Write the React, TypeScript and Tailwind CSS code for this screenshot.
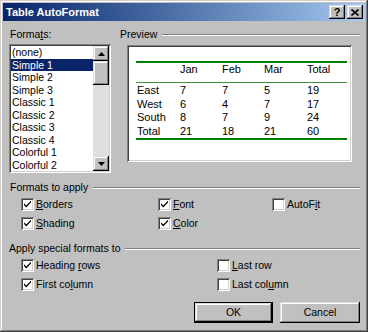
import React from "react";

const raised =
  "shadow-[inset_-1px_-1px_#000000,inset_1px_1px_#dcdcdc,inset_-2px_-2px_#808080,inset_2px_2px_#ffffff]";
const sunken =
  "shadow-[inset_1px_1px_#808080,inset_-1px_-1px_#ffffff,inset_2px_2px_#404040,inset_-2px_-2px_#d4d0c8]";

function Check({ checked, label }: { checked: boolean; label: React.ReactNode }) {
  return (
    <div className="flex items-center gap-[2px] h-[13px]">
      <div className={`w-[13px] h-[13px] bg-white shrink-0 ${sunken} relative`}>
        {checked && (
          <svg width="13" height="13" viewBox="0 0 13 13" className="absolute left-0 top-0">
            <path d="M3 5.2 L5.2 7.6 L10 2.8 L10 4.6 L5.2 9.4 L3 7.1 Z" fill="#000" />
          </svg>
        )}
      </div>
      <span className="leading-[13px] whitespace-nowrap">{label}</span>
    </div>
  );
}

function GroupLabel({ text, className = "" }: { text: string; className?: string }) {
  return (
    <div className={`flex items-center h-[13px] ${className}`}>
      <span className="leading-[13px] whitespace-nowrap">{text}</span>
      <div className="flex-1 ml-[5px] border-t border-t-[#808080] border-b border-b-white" />
    </div>
  );
}

const items = [
  "(none)",
  "Simple 1",
  "Simple 2",
  "Simple 3",
  "Classic 1",
  "Classic 2",
  "Classic 3",
  "Classic 4",
  "Colorful 1",
  "Colorful 2",
];

const rows = [
  ["East", "7", "7", "5", "19"],
  ["West", "6", "4", "7", "17"],
  ["South", "8", "7", "9", "24"],
  ["Total", "21", "18", "21", "60"],
];

function Arrow({ up }: { up: boolean }) {
  return (
    <svg width="7" height="4" viewBox="0 0 7 4">
      {up ? <path d="M3.5 0 L7 4 L0 4 Z" fill="#000" /> : <path d="M0 0 L7 0 L3.5 4 Z" fill="#000" />}
    </svg>
  );
}

export default function App() {
  return (
    <div
      className={`w-[368px] h-[332px] bg-[#c0c0c0] text-black font-['Liberation_Sans',Arial,sans-serif] text-[10.5px] flex flex-col shadow-[inset_-1px_-1px_#404040,inset_1px_1px_#d4d0c8,inset_-2px_-2px_#808080,inset_2px_2px_#ffffff] overflow-hidden`}
    >
      {/* Title bar */}
      <div className="mx-[3px] mt-[3px] h-[18px] flex items-center justify-between bg-gradient-to-r from-[#0a246a] to-[#a6caf0]">
        <span className="pl-[3px] text-white font-bold text-[11px] leading-[18px]">Table AutoFormat</span>
        <div className="flex items-center mr-[2px] gap-[2px]">
          <div className={`w-[16px] h-[14px] bg-[#c0c0c0] ${raised} flex items-center justify-center`}>
            <span className="font-bold text-[11px] leading-[11px] mt-[1px]">?</span>
          </div>
          <div className={`w-[16px] h-[14px] bg-[#c0c0c0] ${raised} flex items-center justify-center`}>
            <svg width="8" height="7" viewBox="0 0 8 7">
              <path d="M0.5 0.5 L7.5 6.5 M7.5 0.5 L0.5 6.5" stroke="#000" strokeWidth="1.6" />
            </svg>
          </div>
        </div>
      </div>

      {/* Top section */}
      <div className="flex mt-[7px] pl-[9px]">
        <div className="w-[102px] flex flex-col">
          <span className="pl-[1px] leading-[13px] h-[13px]">
            Forma<u className="underline-offset-1">t</u>s:
          </span>
          <div className={`mt-[3px] h-[129px] bg-white ${sunken} p-[2px] flex`}>
            <div className="flex-1 flex flex-col">
              {items.map((it, i) => (
                <div
                  key={it}
                  className={`h-[12.5px] leading-[12.5px] pl-[1px] whitespace-nowrap ${
                    i === 1 ? "bg-[#0a246a] text-white" : ""
                  }`}
                >
                  {it}
                </div>
              ))}
            </div>
            <div className="w-[16px] flex flex-col bg-[#dfdfdf]">
              <div className={`h-[15px] bg-[#c0c0c0] ${raised} flex items-center justify-center`}>
                <Arrow up />
              </div>
              <div className={`h-[24px] bg-[#c0c0c0] ${raised}`} />
              <div className="flex-1" />
              <div className={`h-[15px] bg-[#c0c0c0] ${raised} flex items-center justify-center`}>
                <Arrow up={false} />
              </div>
            </div>
          </div>
        </div>

        <div className="ml-[9px] w-[240px] flex flex-col">
          <GroupLabel text="Preview" />
          <div className={`ml-[7px] mt-[4px] w-[225px] h-[117px] bg-white ${sunken} pt-[16px] pl-[9px] pr-[5px]`}>
            <div className="h-[2px] bg-[#008000]" />
            <div className="h-[19px] grid grid-cols-[43px_42px_42px_43px_1fr] pl-[1px] text-[11px] leading-[13px]">
              <span></span>
              <span>Jan</span>
              <span>Feb</span>
              <span>Mar</span>
              <span>Total</span>
            </div>
            <div className="h-[1px] bg-[#3f8f3f]" />
            <div className="mt-[1px]">
              {rows.map((r) => (
                <div
                  key={r[0]}
                  className="h-[13.5px] grid grid-cols-[43px_42px_42px_43px_1fr] pl-[1px] text-[11px] leading-[13.5px]"
                >
                  {r.map((c, j) => (
                    <span key={j}>{c}</span>
                  ))}
                </div>
              ))}
            </div>
            <div className="h-[2px] bg-[#008000]" />
          </div>
        </div>
      </div>

      {/* Formats to apply */}
      <GroupLabel text="Formats to apply" className="mt-[8px] ml-[10px] mr-[8px]" />
      <div className="mt-[3.5px] pl-[21px] grid grid-cols-[137px_114px_1fr] gap-y-[6px]">
        <Check checked label={<><u>B</u>orders</>} />
        <Check checked label={<><u>F</u>ont</>} />
        <Check checked={false} label={<>AutoF<u>i</u>t</>} />
        <Check checked label={<><u>S</u>hading</>} />
        <Check checked label={<><u>C</u>olor</>} />
        <div />
      </div>

      {/* Apply special formats to */}
      <GroupLabel text="Apply special formats to" className="mt-[12.5px] ml-[9px] mr-[8px]" />
      <div className="mt-[3.5px] pl-[21px] grid grid-cols-[196px_1fr] gap-y-[6px]">
        <Check checked label={<>Heading <u>r</u>ows</>} />
        <Check checked={false} label={<><u>L</u>ast row</>} />
        <Check checked label={<>First co<u>l</u>umn</>} />
        <Check checked={false} label={<>Last col<u>u</u>mn</>} />
      </div>

      {/* Buttons */}
      <div className="mt-[11.5px] flex justify-end gap-[7px] pr-[8px]">
        <div className="w-[79px] h-[21px] border border-black flex">
          <div className={`flex-1 bg-[#c0c0c0] ${raised} flex items-center justify-center leading-[13px]`}>OK</div>
        </div>
        <div className={`w-[80px] h-[21px] bg-[#c0c0c0] ${raised} flex items-center justify-center leading-[13px]`}>
          Cancel
        </div>
      </div>
    </div>
  );
}
